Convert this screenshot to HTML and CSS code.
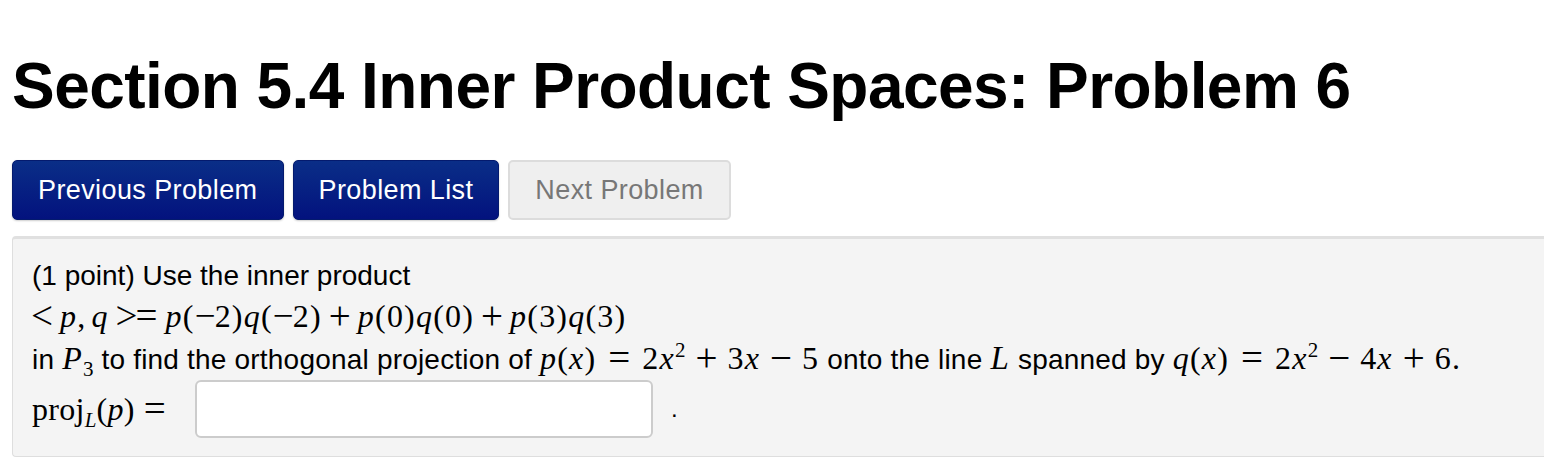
FILE: index.html
```html
<!DOCTYPE html>
<html>
<head>
<meta charset="utf-8">
<link rel="stylesheet" href="styles.css">
</head>
<body>
<div class="page">
  <h1 class="title">Section 5.4 Inner Product Spaces: Problem 6</h1>
  <div class="nav">
    <button class="btn btn-primary">Previous Problem</button>
    <button class="btn btn-primary">Problem List</button>
    <button class="btn btn-disabled">Next Problem</button>
  </div>
  <div class="problem">
    <div class="line">(1 point) Use the inner product</div>
    <div class="line l2"><span class="m"><span class="op rel0">&lt;</span><i>p</i><span class="punct">,</span><i>q</i><span class="op rel1">&gt;</span><span class="op rel2">=</span><i>p</i>(<span class="neg">−</span>2)<i>q</i>(<span class="neg">−</span>2)<span class="op bin">+</span><i>p</i>(0)<i>q</i>(0)<span class="op bin">+</span><i>p</i>(3)<i>q</i>(3)</span></div>
    <div class="line l3">in <span class="m"><i>P</i><sub>3</sub></span> to find the orthogonal projection of <span class="m"><i>p</i>(<i>x</i>)<span class="op rel">=</span>2<i>x</i><sup>2</sup><span class="op bin">+</span>3<i>x</i><span class="op bin">−</span>5</span> onto the line <span class="m"><i class="bigL">L</i></span> spanned by <span class="m"><i>q</i>(<i>x</i>)<span class="op rel">=</span>2<i>x</i><sup>2</sup><span class="op bin">−</span>4<i>x</i><span class="op bin">+</span>6.</span></div>
    <div class="answer-row">
      <span class="m lhs">proj<sub><i>L</i></sub>(<i>p</i>)<span class="op rel">=</span></span>
      <input class="answer" type="text">
      <span class="dot">.</span>
    </div>
  </div>
</div>
</body>
</html>
```
FILE: styles.css
```css
html, body {
  margin: 0;
  padding: 0;
  background: #fff;
}
.page {
  padding: 0 0 0 12px;
  font-family: "Liberation Sans", Arial, sans-serif;
  color: #000;
}
.title {
  margin: 0;
  padding-top: 48px;
  font-size: 64px;
  font-weight: bold;
  line-height: 76px;
  letter-spacing: -0.55px;
}
.nav {
  display: flex;
  gap: 9px;
  margin-top: 36px;
}
.btn {
  height: 60px;
  padding: 0 25px;
  font-family: "Liberation Sans", Arial, sans-serif;
  font-size: 27px;
  border-radius: 5px;
  letter-spacing: 0.4px;
}
.btn-primary {
  color: #fff;
  background: linear-gradient(#0a2e87, #03127e);
  border: 1px solid #041a6e;
  box-shadow: 0 1px 2px rgba(0,0,0,0.2);
}
.btn-disabled {
  color: #777;
  background: #efefef;
  border: 2px solid #dcdcdc;
}
.problem {
  margin-top: 16px;
  background: #f4f4f4;
  border: 1px solid #dedede;
  border-right: none;
  border-top: 3px solid #e0e0e0;
  border-radius: 4px 0 0 4px;
  padding: 17px 0 18px 19px;
  font-size: 28px;
  letter-spacing: 0;
}
.line {
  line-height: 40px;
}
.l3 {
  letter-spacing: 0.2px;
}
.m {
  font-family: "Liberation Serif", "Times New Roman", serif;
  font-size: 32px;
  letter-spacing: 1.2px;
}
.m sub, .m sup {
  font-size: 21px;
  line-height: 0;
  letter-spacing: 0;
}
.op {
  display: inline-block;
  font-size: 39px;
  line-height: 0;
  vertical-align: -2px;
  letter-spacing: 0;
  text-align: center;
  width: 24px;
}
.rel { margin: 0 11px; }
.bin { margin: 0 9px; }
.l2 .bin { margin: 0 6px; }
.rel0 { margin-right: 6px; margin-left: -2px; }
.rel1 { margin-left: 6px; }
.rel2 { margin-right: 7px; margin-left: -4px; }
.neg {
  display: inline-block;
  font-size: 37px;
  line-height: 0;
  vertical-align: -1px;
  width: 20px;
  text-align: center;
  letter-spacing: 0;
}
.punct { margin-right: 5px; }
.bigL { font-size: 33px; }
.answer-row {
  display: flex;
  align-items: center;
  margin-top: 0;
}
.lhs {
  width: 163px;
  letter-spacing: 0.3px;
}
.lhs .rel { margin: 0 8px; }
.answer {
  width: 458px;
  height: 58px;
  box-sizing: border-box;
  border: 2px solid #cccccc;
  border-radius: 6px;
  background: #fff;
  margin: 0;
}
.dot {
  margin-left: 18px;
  font-size: 24px;
}
```
